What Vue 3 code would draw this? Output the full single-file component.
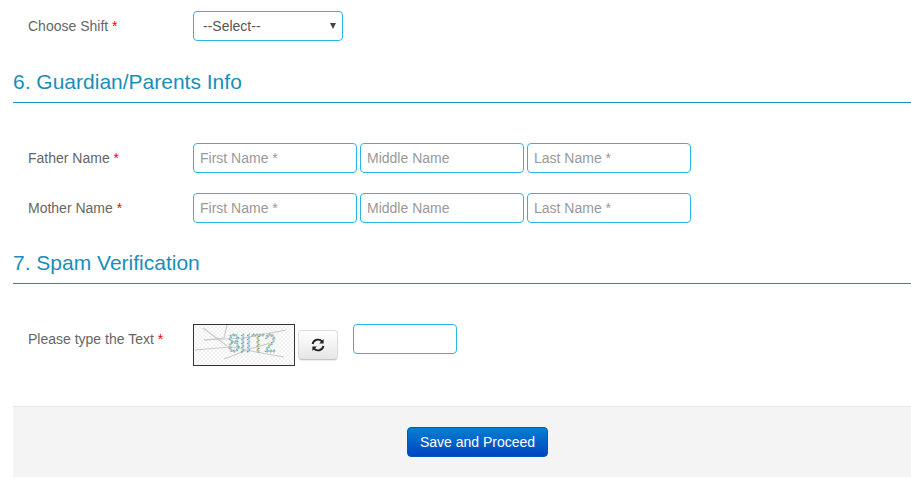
<template>
  <div class="page">
    <div class="form-row shift-row">
      <label class="form-label">Choose Shift <span class="req">*</span></label>
      <div class="select-wrap">
        <select class="form-select">
          <option>--Select--</option>
        </select>
      </div>
    </div>

    <h3 class="section-title">6. Guardian/Parents Info</h3>

    <div class="guardian-rows">
      <div v-for="person in parents" :key="person" class="form-row">
        <label class="form-label">{{ person }} Name <span class="req">*</span></label>
        <div class="name-fields">
          <input class="form-input name-input" type="text" placeholder="First Name *" />
          <input class="form-input name-input" type="text" placeholder="Middle Name" />
          <input class="form-input name-input" type="text" placeholder="Last Name *" />
        </div>
      </div>
    </div>

    <h3 class="section-title spam-title">7. Spam Verification</h3>

    <div class="form-row captcha-row">
      <label class="form-label captcha-label">Please type the Text <span class="req">*</span></label>
      <div class="captcha-box">
        <svg class="captcha-art" width="100" height="40" viewBox="0 0 100 40">
          <g fill="none" stroke="#cbcbcb" stroke-width="1.2">
            <path d="M9 3 L33 21 L62 27 L90 32" />
            <path d="M33 0 L30 13 L10 15" />
            <path d="M10 15 L50 13 L92 5" />
            <path d="M1 25 L36 22" />
            <path d="M30 34 L56 24 L76 18" />
          </g>
          <text class="captcha-text" x="34" y="27" textLength="48" lengthAdjust="spacingAndGlyphs">8IIT2</text>
        </svg>
      </div>
      <button class="refresh-btn" type="button" aria-label="Refresh">
        <svg width="14" height="14" viewBox="0 0 14 14" fill="none" stroke="#222" stroke-width="1.9">
          <path d="M1.6 6 A5.5 5.5 0 0 1 11.2 3.6" />
          <path d="M12.4 8 A5.5 5.5 0 0 1 2.8 10.4" />
          <path d="M12.6 1 V5.4 H8.2 Z" fill="#222" stroke="none" />
          <path d="M1.4 13 V8.6 H5.8 Z" fill="#222" stroke="none" />
        </svg>
      </button>
      <input class="form-input captcha-input" type="text" />
    </div>

    <div class="form-footer">
      <button class="submit-btn" type="button">Save and Proceed</button>
    </div>
  </div>
</template>

<script setup>
const parents = ['Father', 'Mother']
</script>

<style>
body {
  background: #fff;
}
</style>

<style scoped>
.page {
  padding: 11px 0 10px 13px;
  font-family: 'Liberation Sans', Arial, sans-serif;
  font-size: 14px;
  color: #555;
}

.form-row {
  display: flex;
  align-items: center;
}

.form-label {
  width: 165px;
  margin-left: 15px;
  flex-shrink: 0;
  line-height: 20px;
  color: #666;
}

.req {
  color: #f00;
}

.select-wrap {
  position: relative;
  width: 150px;
  height: 30px;
}

/* small dark arrow instead of the browser chevron */
.select-wrap::after {
  content: '';
  position: absolute;
  right: 7px;
  top: 12px;
  border-left: 3px solid transparent;
  border-right: 3px solid transparent;
  border-top: 6px solid #444;
  pointer-events: none;
}

.form-select,
.form-input {
  height: 30px;
  box-sizing: border-box;
  border: 1px solid #29b6e6;
  border-radius: 4px;
  background: #fff;
  font-family: inherit;
  font-size: 14px;
  outline: none;
}

.form-select {
  appearance: none;
  width: 100%;
  padding: 0 9px;
  color: #555;
}

.form-input {
  padding: 0 6px;
  color: #555;
}

.form-input::placeholder {
  color: #999;
  opacity: 1;
}

.section-title {
  margin: 0;
  height: 33px;
  padding-top: 28px;
  border-bottom: 1px solid #0f94bd;
  font-size: 21px;
  font-weight: 400;
  line-height: 25px;
  color: #1a8dbb;
}

.guardian-rows {
  display: flex;
  flex-direction: column;
  gap: 20px;
  padding-top: 40px;
}

.name-fields {
  display: flex;
  gap: 3px;
}

.name-input {
  width: 164px;
}

.spam-title {
  padding-top: 27px;
}

.captcha-row {
  align-items: flex-start;
  padding-top: 40px;
}

.captcha-label {
  padding-top: 5px;
}

.captcha-box {
  position: relative;
  width: 102px;
  height: 42px;
  box-sizing: border-box;
  border: 1px solid #333;
  background-color: #fff;
  background-image:
    radial-gradient(#bdbdbd 0.55px, transparent 0.75px),
    radial-gradient(#bdbdbd 0.55px, transparent 0.75px);
  background-size: 4px 4px;
  background-position: 0 0, 2px 2px;
  overflow: hidden;
}

.captcha-art {
  display: block;
}

.captcha-text {
  font-size: 26px;
  fill: #b4cbe2;
  stroke: #1f9440;
  stroke-width: 1;
  stroke-dasharray: 1 3;
}

.refresh-btn {
  width: 40px;
  height: 30px;
  margin: 6px 15px 0 3px;
  padding: 0;
  display: flex;
  align-items: center;
  justify-content: center;
  border: 1px solid #ddd;
  border-bottom-color: #c4c4c4;
  border-radius: 4px;
  background: linear-gradient(to bottom, #fff, #e6e6e6);
  box-shadow: 0 1px 1px rgba(0, 0, 0, 0.08);
}

.captcha-input {
  width: 104px;
}

.form-footer {
  display: flex;
  justify-content: center;
  margin-top: 40px;
  padding: 20px 0 20px 31px;
  border-top: 1px solid #e5e5e5;
  background: #f4f4f4;
}

.submit-btn {
  width: 141px;
  height: 30px;
  padding: 0;
  border: 1px solid #0059b3;
  border-radius: 4px;
  background: linear-gradient(to bottom, #0480d1, #0044c2);
  color: #fff;
  font-family: inherit;
  font-size: 14px;
}
</style>
